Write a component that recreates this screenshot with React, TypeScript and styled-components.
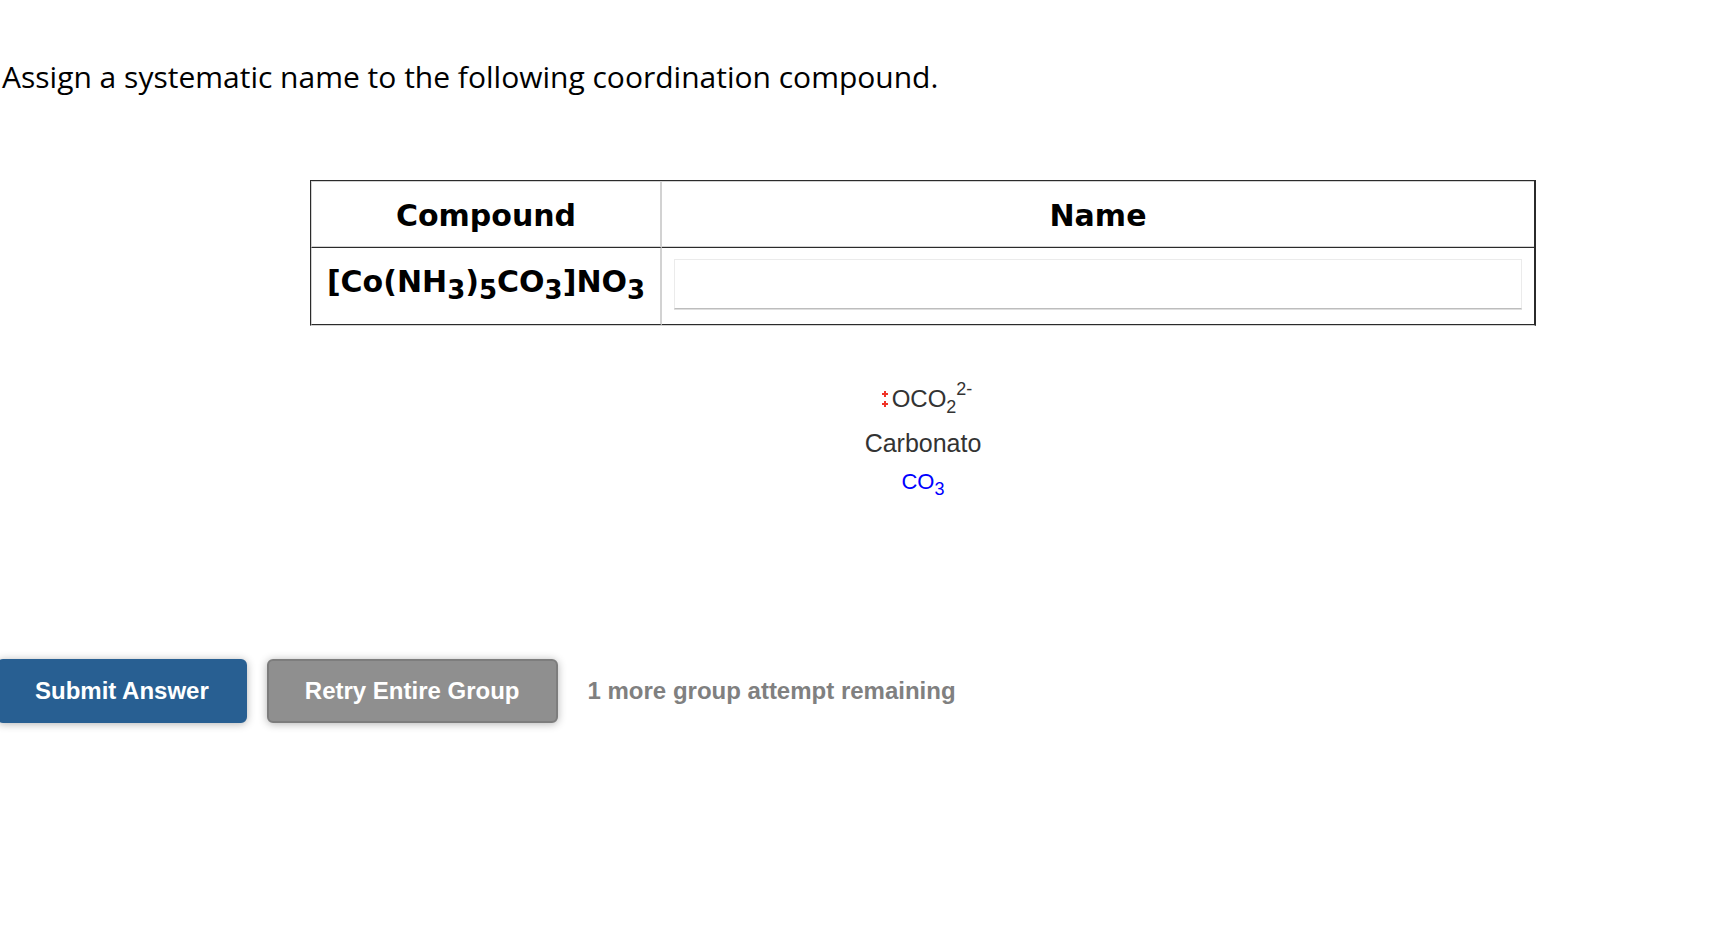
import React from 'react';
import styled, { createGlobalStyle } from 'styled-components';

const GlobalStyle = createGlobalStyle`
  *, *::before, *::after { box-sizing: border-box; }
  body { margin: 0; background: #fff; color: #000; }
`;

const ink = '#2b2b2b';
const rule = '#d2d2d2';

const Page = styled.main`
  padding-top: 52px;
  overflow-x: hidden;
`;

const Prompt = styled.p`
  margin: 0;
  padding-left: 2px;
  font: 30px/50px 'Open Sans', sans-serif;
`;

const Content = styled.section`
  display: flex;
  flex-direction: column;
  align-items: center;
  padding: 78px 0 0 124px;
`;

const CompoundTable = styled.table`
  width: 1226px;
  max-width: 100%;
  border: 1px solid ${ink};
  border-right-width: 2px;
  border-bottom-color: ${rule};
  border-collapse: separate;
  border-spacing: 0;
  font: 30px/40px Verdana, 'DejaVu Sans', sans-serif;
`;

const HeadCell = styled.th<{ $first?: boolean }>`
  width: ${(p) => (p.$first ? '351px' : 'auto')};
  height: 67px;
  padding: 14px 12px 0;
  border: 0 solid ${rule};
  border-width: ${(p) => (p.$first ? '1px 2px 1px 1px' : '1px 0')};
  border-bottom-color: ${ink};
  box-shadow: inset 0 -1px ${rule};
  text-align: center;
  vertical-align: top;
`;

const FormulaCell = styled.th`
  height: 77px;
  padding: 14px 12px 0;
  border: 0 solid ${rule};
  border-width: 0 2px 1px 1px;
  border-bottom-color: ${ink};
  text-align: center;
  vertical-align: top;
  white-space: nowrap;
`;

const InputCell = styled.td`
  padding: 11px 12px 14px;
  border-bottom: 1px solid ${ink};
  vertical-align: top;
`;

const FormulaSub = styled.sub`
  font-size: 26px;
  line-height: 0;
`;

const NameInput = styled.input`
  display: block;
  width: 100%;
  height: 50px;
  padding: 0 12px;
  border: 1px solid #ebebeb;
  border-bottom-color: #bdbdbd;
  box-shadow: 0 1px #dedede;
  font: inherit;
`;

const Ligand = styled.figure`
  display: flex;
  flex-direction: column;
  align-items: center;
  margin: 51px 0 0;
  color: #333;
  font: 24px/44px 'Liberation Sans', Arial, sans-serif;
`;

const LigandFormula = styled.div`
  display: flex;
  align-items: center;
  padding-left: 8px;
`;

const LonePair = styled.svg`
  width: 6px;
  height: 18px;
  margin-right: 4px;
  fill: #f03428;
`;

const LigandName = styled.figcaption`
  font-size: 25px;
`;

const Symbol = styled.div`
  color: #0000ff;
  font-size: 22px;
  line-height: 34px;
`;

const Script = styled.span<{ $raised?: boolean }>`
  font-size: 18px;
  line-height: 0;
  vertical-align: ${(p) => (p.$raised ? '12px' : '-6px')};
`;

const Actions = styled.div`
  display: flex;
  align-items: center;
  gap: 20px;
  margin: 160px 0 20px -3px;
  font: 700 24px/32px 'Liberation Sans', Arial, sans-serif;
`;

const Button = styled.button<{ $primary?: boolean }>`
  height: 64px;
  padding: 0 36px;
  border: 2px solid ${(p) => (p.$primary ? '#285f92' : '#7d7d7d')};
  border-radius: 6px;
  background: ${(p) => (p.$primary ? '#285f92' : '#8f8f8f')};
  box-shadow: 0 1px 8px rgba(0, 0, 0, 0.3);
  color: #fff;
  font: inherit;
  white-space: nowrap;
`;

const Attempts = styled.span`
  padding-left: 10px;
  color: #808080;
`;

export default function App() {
  return (
    <Page>
      <GlobalStyle />
      <Prompt>Assign a systematic name to the following coordination compound.</Prompt>
      <Content>
        <CompoundTable>
          <thead>
            <tr>
              <HeadCell scope="col" $first>Compound</HeadCell>
              <HeadCell scope="col">Name</HeadCell>
            </tr>
          </thead>
          <tbody>
            <tr>
              <FormulaCell scope="row">
                <label htmlFor="compound-name">
                  [Co(NH<FormulaSub>3</FormulaSub>)<FormulaSub>5</FormulaSub>CO
                  <FormulaSub>3</FormulaSub>]NO<FormulaSub>3</FormulaSub>
                </label>
              </FormulaCell>
              <InputCell>
                <NameInput id="compound-name" type="text" />
              </InputCell>
            </tr>
          </tbody>
        </CompoundTable>
        <Ligand>
          <LigandFormula>
            <LonePair viewBox="0 0 6 18" aria-hidden="true">
              <path d="M2 1h2v2h2v2H4v2H2V5H0V3h2ZM2 11h2v2h2v2H4v2H2v-2H0v-2h2Z" />
            </LonePair>
            <span>
              OCO<Script>2</Script><Script $raised>2-</Script>
            </span>
          </LigandFormula>
          <LigandName>Carbonato</LigandName>
          <Symbol>
            CO<Script>3</Script>
          </Symbol>
        </Ligand>
      </Content>
      <Actions>
        <Button type="submit" $primary>Submit Answer</Button>
        <Button type="button">Retry Entire Group</Button>
        <Attempts>1 more group attempt remaining</Attempts>
      </Actions>
    </Page>
  );
}
